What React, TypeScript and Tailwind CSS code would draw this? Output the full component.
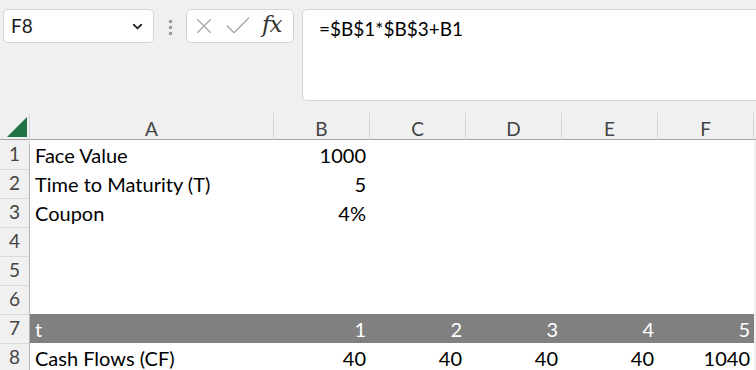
import { ChevronDown, X, Check } from 'lucide-react';

const cols = ['A', 'B', 'C', 'D', 'E', 'F'];

type Row = { n: number; label?: string; values?: string[]; dark?: boolean };

const rows: Row[] = [
  { n: 1, label: 'Face Value', values: ['1000'] },
  { n: 2, label: 'Time to Maturity (T)', values: ['5'] },
  { n: 3, label: 'Coupon', values: ['4%'] },
  { n: 4 },
  { n: 5 },
  { n: 6 },
  { n: 7, label: 't', values: ['1', '2', '3', '4', '5'], dark: true },
  { n: 8, label: 'Cash Flows (CF)', values: ['40', '40', '40', '40', '1040'] },
];

export default function App() {
  return (
    <div className="w-[756px] h-[370px] overflow-hidden bg-[#f0f0f0] font-['Lato',sans-serif] text-[20px] text-black">
      {/* Formula bar */}
      <div className="flex items-start h-[113px] pt-[9px] pl-[3px] text-[19px]">
        <div className="flex items-center justify-between w-[151px] h-[34px] bg-white border border-[#d4d4d4] rounded-[5px] pl-[7px] pr-[8px]">
          <span className="text-[#1b1b1b]">F8</span>
          <ChevronDown className="w-[15px] h-[15px] text-[#222]" strokeWidth={3} />
        </div>
        <div className="flex flex-col items-center gap-[3px] w-[32px] pt-[11px]">
          <div className="w-[3px] h-[3px] bg-[#9a9a9a]" />
          <div className="w-[3px] h-[3px] bg-[#9a9a9a]" />
          <div className="w-[3px] h-[3px] bg-[#9a9a9a]" />
        </div>
        <div className="flex items-center w-[108px] h-[34px] bg-white border border-[#d4d4d4] rounded-[5px] pl-[4px]">
          <X className="w-[26px] h-[26px] text-[#a6a6a6]" strokeWidth={1.1} />
          <Check className="w-[32px] h-[32px] ml-[5px] text-[#a6a6a6]" strokeWidth={1} />
          <span className="ml-[8px] font-['DejaVu_Serif',serif] italic text-[23px] leading-none text-[#333] -mt-[3px] tracking-[-1px]">fx</span>
        </div>
        <div className="flex-1 ml-[8px] -mr-[6px] h-[92px] bg-white border border-[#d4d4d4] rounded-[5px] pl-[16px] pt-[5px]">
          =$B$1*$B$3+B1
        </div>
      </div>

      {/* Column headers */}
      <div className="grid grid-cols-[30px_244px_96px_96px_96px_96px_96px] h-[27px] border-b border-[#a3a3a3]">
        <div className="relative border-r border-[#d6d6d6]">
          <div className="absolute left-[7px] top-[4px] w-0 h-0 border-l-[20px] border-l-transparent border-b-[20px] border-b-[#217346]" />
        </div>
        {cols.map(c => (
          <div key={c} className="flex items-center justify-center border-r border-[#d6d6d6] text-[#444] text-[19px] pt-[2px]">
            {c}
          </div>
        ))}
        <div />
      </div>

      {/* Cells */}
      {rows.map(r => (
        <div key={r.n} className="grid grid-cols-[30px_244px_96px_96px_96px_96px_96px] h-[29px]">
          <div className="flex items-center justify-center border-r border-[#b5b5b5] border-b border-b-[#dadada] text-[#444] text-[19px]">
            {r.n}
          </div>
          <div className={`flex items-center pl-[5px] ${r.dark ? 'bg-[#808080] text-white' : 'bg-white'}`}>
            {r.label}
          </div>
          {[0, 1, 2, 3, 4].map(i => (
            <div
              key={i}
              className={`flex items-center justify-end pr-[4px] ${r.dark ? 'bg-[#808080] text-white' : 'bg-white'}`}
            >
              {r.values?.[i]}
            </div>
          ))}
          <div className={r.dark ? 'bg-[#808080]' : 'bg-white'} />
        </div>
      ))}
    </div>
  );
}
